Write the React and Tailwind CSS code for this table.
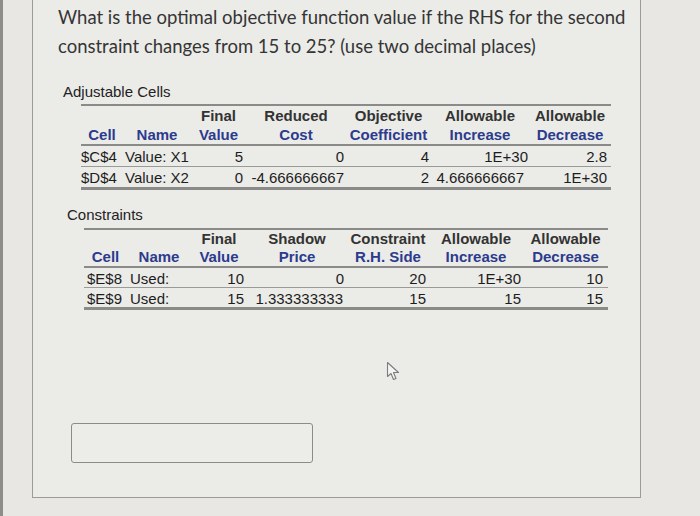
import React from "react";

const t1Cols = "grid-cols-[42px_68px_55px_100px_85px_98px_82px]";
const t2Cols = "grid-cols-[43px_64px_56px_100px_82px_94px_85px]";

function Header({ cols, top, bottom, lh }) {
  return (
    <div className={`grid ${cols} font-bold text-center ${lh}`}>
      {top.map((t, i) => (
        <div key={"t" + i} className="text-[#333333]">{t || "\u00a0"}</div>
      ))}
      {bottom.map((t, i) => (
        <div key={"b" + i} className="text-[#2c3b8e]">{t}</div>
      ))}
    </div>
  );
}

function Row({ cols, cells, h, pads }) {
  return (
    <div className={`grid ${cols} ${h} items-center text-[#1d1d1d]`}>
      {cells.map((c, i) => (
        <div
          key={i}
          className={i < 2 ? "text-left whitespace-nowrap" : "text-right whitespace-nowrap"}
          style={{ paddingLeft: i < 2 ? pads[i] : 0, paddingRight: i >= 2 ? pads[i] : 0 }}
        >
          {c}
        </div>
      ))}
    </div>
  );
}

export default function App() {
  return (
    <div
      className="relative w-[700px] h-[516px] overflow-hidden bg-[#e8e7e3]"
      style={{ fontFamily: "'Liberation Sans', Arial, sans-serif" }}
    >
      <div className="absolute left-0 top-0 w-[3px] h-full bg-[#8d8d8a]" />
      <div className="ml-[32px] w-[609px] h-[498px] border-l border-r border-b border-[#9b9b98] bg-[#ebebe8] relative">
        <p
          className="pl-[25px] pt-[3px] text-[18.5px] leading-[29px] text-[#353535] whitespace-nowrap"
          style={{ fontFamily: "Lato, 'Open Sans', sans-serif" }}
        >
          What is the optimal objective function value if the RHS for the second
          <br />
          constraint changes from 15 to 25? (use two decimal places)
        </p>

        <div className="pl-[30px] mt-[21px] text-[15px] leading-[20px] text-[#222]">Adjustable Cells</div>

        <div className="ml-[48px] mt-[2px] w-[530px] text-[15px]">
          <div className="h-[2px] bg-[#8a8a88]" />
          <Header
            cols={t1Cols}
            lh="leading-[19px]"
            top={["", "", "Final", "Reduced", "Objective", "Allowable", "Allowable"]}
            bottom={["Cell", "Name", "Value", "Cost", "Coefficient", "Increase", "Decrease"]}
          />
          <div className="h-[2px] bg-[#8a8a88]" />
          <Row
            cols={t1Cols}
            h="h-[20px]"
            pads={[0, 2, 3, 2, 2, 1, 4]}
            cells={["$C$4", "Value: X1", "5", "0", "4", "1E+30", "2.8"]}
          />
          <div className="h-px bg-[#9a9a98]" />
          <Row
            cols={t1Cols}
            h="h-[20px]"
            pads={[0, 2, 3, 2, 2, 5, 4]}
            cells={["$D$4", "Value: X2", "0", "-4.666666667", "2", "4.666666667", "1E+30"]}
          />
          <div className="h-[3px] bg-[#8a8a88]" />
        </div>

        <div className="pl-[34px] mt-[15px] text-[15px] leading-[20px] text-[#222]">Constraints</div>

        <div className="ml-[51px] mt-[3px] w-[524px] text-[15px]">
          <div className="h-[2px] bg-[#8a8a88]" />
          <Header
            cols={t2Cols}
            lh="leading-[18px]"
            top={["", "", "Final", "Shadow", "Constraint", "Allowable", "Allowable"]}
            bottom={["Cell", "Name", "Value", "Price", "R.H. Side", "Increase", "Decrease"]}
          />
          <div className="h-[2px] bg-[#8a8a88]" />
          <Row
            cols={t2Cols}
            h="h-[19px]"
            pads={[3, 3, 3, 3, 3, 2, 5]}
            cells={["$E$8", "Used:", "10", "0", "20", "1E+30", "10"]}
          />
          <div className="h-px bg-[#9a9a98]" />
          <Row
            cols={t2Cols}
            h="h-[19px]"
            pads={[3, 3, 3, 4, 3, 2, 5]}
            cells={["$E$9", "Used:", "15", "1.333333333", "15", "15", "15"]}
          />
          <div className="h-[3px] bg-[#8a8a88]" />
        </div>

        <div className="ml-[38px] mt-[113px] w-[242px] h-[40px] border border-[#8b8b89] rounded-[3px] bg-[#ecece9]" />

        <svg
          className="absolute left-[353px] top-[361px]"
          width="16"
          height="21"
          viewBox="0 0 16 21"
        >
          <path
            d="M1.5 1.5 L1.5 15.5 L5 12.5 L7.5 18.5 L10 17.5 L7.5 11.5 L12.5 11.5 Z"
            fill="#f4f4f2"
            stroke="#7b7b80"
            strokeWidth="1.1"
            strokeLinejoin="round"
          />
        </svg>
      </div>
    </div>
  );
}
